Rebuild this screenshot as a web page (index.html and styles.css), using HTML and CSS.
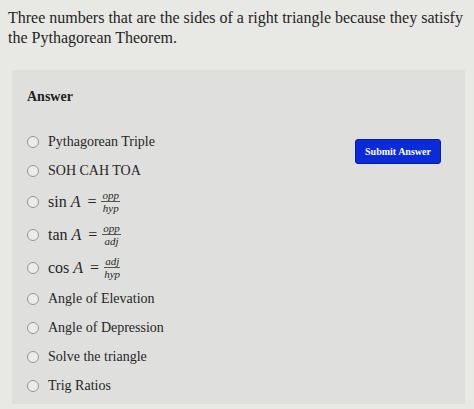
FILE: index.html
```html
<!DOCTYPE html>
<html>
<head>
<meta charset="utf-8">
<link rel="stylesheet" href="styles.css">
</head>
<body>
<div class="page">
  <p class="question">Three numbers that are the sides of a right triangle because they satisfy the Pythagorean Theorem.</p>
  <section class="panel">
    <h2 class="answer-title">Answer</h2>
    <div class="answer-body">
      <ul class="options">
        <li class="option"><span class="radio"></span><span class="label">Pythagorean Triple</span></li>
        <li class="option"><span class="radio"></span><span class="label">SOH CAH TOA</span></li>
        <li class="option math-row"><span class="radio"></span><span class="label math"><span class="fn">sin</span> <i class="var">A</i> <span class="eq">=</span> <span class="frac"><i class="num">opp</i><i class="den">hyp</i></span></span></li>
        <li class="option math-row"><span class="radio"></span><span class="label math"><span class="fn">tan</span> <i class="var">A</i> <span class="eq">=</span> <span class="frac"><i class="num">opp</i><i class="den">adj</i></span></span></li>
        <li class="option math-row"><span class="radio"></span><span class="label math"><span class="fn">cos</span> <i class="var">A</i> <span class="eq">=</span> <span class="frac"><i class="num">adj</i><i class="den">hyp</i></span></span></li>
        <li class="option"><span class="radio"></span><span class="label">Angle of Elevation</span></li>
        <li class="option"><span class="radio"></span><span class="label">Angle of Depression</span></li>
        <li class="option"><span class="radio"></span><span class="label">Solve the triangle</span></li>
        <li class="option"><span class="radio"></span><span class="label">Trig Ratios</span></li>
      </ul>
      <button class="submit">Submit Answer</button>
    </div>
  </section>
</div>
</body>
</html>
```
FILE: styles.css
```css
html, body {
  margin: 0;
  padding: 0;
  background: #e8e8e5;
}
body {
  font-family: "Liberation Serif", "Times New Roman", serif;
  color: #262626;
  width: 474px;
  height: 409px;
  overflow: hidden;
}
.page {
  display: flex;
  flex-direction: column;
}
.question {
  margin: 0;
  padding: 8px 0 0 8px;
  font-size: 16px;
  letter-spacing: 0;
  line-height: 20px;
  height: 62px;
  box-sizing: border-box;
  color: #1f1f1f;
}
.panel {
  margin-left: 12px;
  width: 453px;
  height: 334px;
  background: #dfe0dd;
  padding: 18px 0 0 15px;
  box-sizing: border-box;
  margin-top: 8px;
}
.answer-title {
  margin: 0;
  font-size: 14px;
  font-weight: bold;
  line-height: 18px;
  color: #222;
}
.answer-body {
  display: flex;
  justify-content: space-between;
  align-items: flex-start;
  margin-top: 21px;
}
.options {
  list-style: none;
  margin: 0;
  padding: 0;
  display: flex;
  flex-direction: column;
}
.option {
  display: flex;
  align-items: center;
  height: 29px;
  font-size: 14px;
}
.option.math-row {
  height: 33px;
}
.radio {
  width: 10px;
  height: 10px;
  border: 1px solid #959595;
  border-radius: 50%;
  background: #ecedeb;
  margin-left: 0;
  margin-right: 9px;
  flex: none;
}
.label {
  color: #262626;
}
.math {
  display: flex;
  align-items: center;
  font-size: 16px;
}
.fn {
  margin-right: 4px;
}
.var {
  font-style: italic;
  margin-right: 7px;
}
.eq {
  margin-right: 5px;
}
.frac {
  display: flex;
  flex-direction: column;
  align-items: center;
  font-size: 11px;
  line-height: 10px;
}
.num {
  padding: 0 1px 1px;
  border-bottom: 1px solid #555;
}
.den {
  padding-top: 1px;
}
.submit {
  margin: 12px 24px 0 0;
  width: 86px;
  height: 25px;
  background: #0b2ad9;
  border: 1px solid #0a1e9a;
  border-radius: 3px;
  color: #fff;
  font-family: "Liberation Serif", "Times New Roman", serif;
  font-size: 10px;
  font-weight: bold;
  padding: 0;
}
```
